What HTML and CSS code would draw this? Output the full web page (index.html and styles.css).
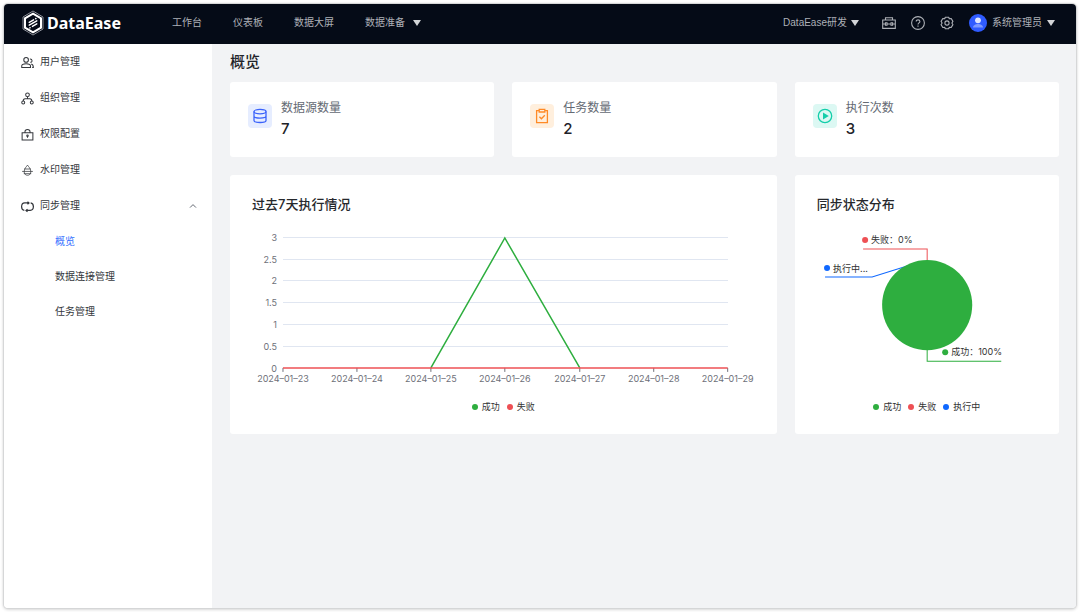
FILE: index.html
```html
<!DOCTYPE html>
<html lang="zh-CN">
<head>
    <meta charset="utf-8">
    <meta name="viewport" content="width=device-width, initial-scale=1.0" />
    <title>DataEase</title>
    <link rel="stylesheet" href="styles.css">
</head>
<body>
    <div class="window">
        <header class="header">
            <a class="logo" href="#">
                <svg class="logo-icon" viewBox="0 0 22 26">
                    <path d="M11 1L21 7V19L11 25L1 19V7Z" fill="none" stroke="#8b8f98" stroke-width="1"/>
                    <path d="M11 3.6L19 8.3V17.7L11 22.4L3 17.7V8.3Z" fill="none" stroke="#fff" stroke-width="2"/>
                    <path d="M7.2 12.4L11.6 9.8M7.2 15.2L14.8 10.8M10.4 16.4L14.8 13.8M13.6 8.7L14 8.5M7.8 17.9L8.2 17.7" stroke="#fff" stroke-width="1.4" stroke-linecap="round"/>
                </svg>
                <span>DataEase</span>
            </a>
            <nav class="nav">
                <a href="#">工作台</a>
                <a href="#">仪表板</a>
                <a href="#">数据大屏</a>
                <a href="#">数据准备<svg class="caret" viewBox="0 0 8 6"><path d="M0 0H8L4 6Z"/></svg></a>
            </nav>
            <div class="tools">
                <button type="button" class="org">DataEase研发<svg class="caret" viewBox="0 0 8 6"><path d="M0 0H8L4 6Z"/></svg></button>
                <button type="button" class="tool" aria-label="工具箱">
                    <svg class="icon" viewBox="0 0 14 14"><path d="M3.5 4V1.8H10.5V4M.7 4H13.3V12.4H.7ZM.7 8H3.4M5 8H9M10.6 8H13.3M3.4 6.8H5V9.2H3.4ZM9 6.8H10.6V9.2H9Z"/></svg>
                </button>
                <button type="button" class="tool" aria-label="帮助">
                    <svg class="icon" viewBox="0 0 14 14"><circle cx="7" cy="7" r="6.4"/><path d="M5.2 5.6C5.2 3.2 8.9 3.3 8.9 5.5C8.9 6.9 7 6.9 7 8.5M7 9.6V10.8"/></svg>
                </button>
                <button type="button" class="tool" aria-label="设置">
                    <svg class="icon" viewBox="0 0 14 14"><path d="M5.3 1.2H8.7L9.3 2.8L11.2 2.5L12.9 5.4L11.9 7L12.9 8.6L11.2 11.5L9.3 11.2L8.7 12.8H5.3L4.7 11.2L2.8 11.5L1.1 8.6L2.1 7L1.1 5.4L2.8 2.5L4.7 2.8Z" stroke-linejoin="round"/><circle cx="7" cy="7" r="2.1"/></svg>
                </button>
                <button type="button" class="user">
                    <svg class="avatar" viewBox="0 0 18 18"><circle cx="9" cy="9" r="9" fill="#2f5bff"/><circle cx="9" cy="6.3" r="2.9" fill="#dfe6ff"/><path d="M4 13.6C4 8.8 14 8.8 14 13.6Z" fill="#7e9aff"/></svg>
                    <span>系统管理员</span>
                    <svg class="caret" viewBox="0 0 8 6"><path d="M0 0H8L4 6Z"/></svg>
                </button>
            </div>
        </header>
        <div class="body">
            <aside class="sidebar">
                <ul class="menu">
                    <li><a href="#">
                        <svg class="icon" viewBox="0 0 14 14"><circle cx="5.5" cy="4.2" r="2.5"/><path d="M.8 12.3V10.6C.8 7.6 10.2 7.6 10.2 10.6V12.3ZM9.6 3.3C12.6 3.2 12.6 6.8 10 6.8M11 8.6C12.6 8.9 13.3 9.8 13.3 12.3H12"/></svg>用户管理</a></li>
                    <li><a href="#">
                        <svg class="icon" viewBox="0 0 14 14"><circle cx="7" cy="3" r="2"/><circle cx="2.4" cy="11.3" r="1.6"/><circle cx="11.6" cy="11.3" r="1.6"/><path d="M7 5V7.3M2.4 9.7C2.4 7.8 3 7.3 4.4 7.3H9.6C11 7.3 11.6 7.8 11.6 9.7"/></svg>组织管理</a></li>
                    <li><a href="#">
                        <svg class="icon" viewBox="0 0 14 14"><path d="M1.2 5H12.8V12.8H1.2ZM4.3 5V3.8C4.3.8 9.7.8 9.7 3.8V5M7 8.6V10.4"/><circle cx="7" cy="8.4" r=".8"/></svg>权限配置</a></li>
                    <li><a href="#">
                        <svg class="icon thin" viewBox="0 0 14 14"><path d="M7 1.2C6 3 3.4 4.6 3.4 8.4C3.4 13.4 10.6 13.4 10.6 8.4C10.6 4.6 8 3 7 1.2ZM3.4 5.4H10.6M1.2 8H12.8M3 10.4H11"/></svg>水印管理</a></li>
                    <li class="open"><a href="#">
                        <svg class="icon bold" viewBox="0 0 14 14"><path d="M3.6 11.2C-.4 10.6-.4 3.4 4 3.2H8.4M7 1.8L8.6 3.2L7 4.6M10.4 3.2C14.4 3.8 14.4 11 10 11.2H5.6M7 9.8L5.4 11.2L7 12.6"/></svg>同步管理
                        <svg class="arrow" viewBox="0 0 8 8"><path d="M1 5.6L4 2.6L7 5.6"/></svg></a>
                        <ul class="submenu">
                            <li><a class="active" href="#">概览</a></li>
                            <li><a href="#">数据连接管理</a></li>
                            <li><a href="#">任务管理</a></li>
                        </ul>
                    </li>
                </ul>
            </aside>
            <main class="main">
                <h1>概览</h1>
                <div class="grid">
                    <section class="card stat">
                        <span class="badge blue"><svg viewBox="0 0 16 16"><ellipse cx="8" cy="3.6" rx="6" ry="2.2"/><path d="M2 3.6V12.4C2 15.2 14 15.2 14 12.4V3.6M2 8C2 10.8 14 10.8 14 8"/></svg></span>
                        <div>
                            <p class="label">数据源数量</p>
                            <p class="value">7</p>
                        </div>
                    </section>
                    <section class="card stat">
                        <span class="badge orange"><svg viewBox="0 0 16 16"><path d="M5.2 2.6H2.6V14.6H13.4V2.6H10.8M5.2 1.4H10.8V4H5.2ZM5.4 8.8L7.4 10.8L10.8 7.2"/></svg></span>
                        <div>
                            <p class="label">任务数量</p>
                            <p class="value">2</p>
                        </div>
                    </section>
                    <section class="card stat">
                        <span class="badge green"><svg viewBox="0 0 16 16"><circle cx="8" cy="8" r="6.7"/><path class="solid" d="M6 4.4L11.8 8L6 11.6Z"/></svg></span>
                        <div>
                            <p class="label">执行次数</p>
                            <p class="value">3</p>
                        </div>
                    </section>
                    <section class="card chart wide">
                        <h2>过去7天执行情况</h2>
                        <svg class="plot" viewBox="0 0 547 165">
                            <g class="lines">
                                <path d="M53 13H498M53 35H498M53 56H498M53 78H498M53 100H498M53 122H498"/>
                            </g>
                            <g class="ticks">
                                <path d="M53 143V147M127 143V147M201 143V147M275 143V147M350 143V147M424 143V147M498 143V147"/>
                            </g>
                            <g class="axis-y">
                                <text x="47" y="16">3</text>
                                <text x="47" y="38">2.5</text>
                                <text x="47" y="59">2</text>
                                <text x="47" y="81">1.5</text>
                                <text x="47" y="103">1</text>
                                <text x="47" y="125">0.5</text>
                                <text x="47" y="147">0</text>
                            </g>
                            <g class="axis-x">
                                <text x="53" y="157">2024–01–23</text>
                                <text x="127" y="157">2024–01–24</text>
                                <text x="201" y="157">2024–01–25</text>
                                <text x="275" y="157">2024–01–26</text>
                                <text x="350" y="157">2024–01–27</text>
                                <text x="424" y="157">2024–01–28</text>
                                <text x="498" y="157">2024–01–29</text>
                            </g>
                            <path class="line success" d="M201 143L275 13L350 143"/>
                            <path class="line fail" d="M53 143H498"/>
                        </svg>
                        <ul class="legend">
                            <li class="success">成功</li>
                            <li class="fail">失败</li>
                        </ul>
                    </section>
                    <section class="card chart">
                        <h2>同步状态分布</h2>
                        <svg class="plot" viewBox="0 0 264 165">
                            <path class="guide success" d="M132 120V136H206"/>
                            <path class="guide fail" d="M132 40V24H68"/>
                            <path class="guide running" d="M112 41L77 52H30"/>
                            <circle cx="132" cy="80" r="45" fill="#2eae3f"/>
                            <g class="pie-text">
                                <circle cx="70" cy="15" r="3" fill="#ee5054"/>
                                <text x="76" y="18">失败：0%</text>
                                <circle cx="32" cy="43" r="3" fill="#0f68ff"/>
                                <text x="38" y="47">执行中...</text>
                                <circle cx="150" cy="127" r="3" fill="#2eae3f"/>
                                <text x="156" y="130">成功：100%</text>
                            </g>
                        </svg>
                        <ul class="legend">
                            <li class="success">成功</li>
                            <li class="fail">失败</li>
                            <li class="running">执行中</li>
                        </ul>
                    </section>
                </div>
            </main>
        </div>
    </div>
</body>
</html>
```
FILE: styles.css
```css
*{
	margin: 0;
	padding: 0;
	box-sizing: border-box;
}
body{
	min-height: 100vh;
	padding: 4px;
	display: flex;
	background-color: #fff;
	color: #1f2329;
	font-family: "Liberation Sans", "Noto Sans CJK SC", sans-serif;
	font-size: 10px;
	line-height: 16px;
}
ul{
	list-style: none;
}
a{
	color: inherit;
	text-decoration: none;
}
button{
	border: 0;
	background: none;
	color: inherit;
	font: inherit;
	cursor: pointer;
}
svg{
	display: block;
	flex: none;
}
.window{
	flex: 1;
	display: flex;
	flex-direction: column;
	border-radius: 4px;
	overflow: hidden;
	box-shadow: 0 0 1px 1px #d4d5d6, 0 1px 3px 1px rgba(0,0,0,.15);
}

/* header */
.header{
	height: 40px;
	padding: 0 21px 2px 18px;
	display: flex;
	align-items: center;
	background-color: #050b17;
	color: #aeb1b7;
}
.logo{
	display: flex;
	align-items: center;
	gap: 3px;
	color: #fff;
	font: bold 16px/24px "Noto Sans", sans-serif;
}
.logo-icon{
	width: 22px;
	height: 26px;
}
.nav{
	margin-left: 51px;
	display: flex;
	gap: 31px;
}
.nav a{
	display: flex;
	align-items: center;
	gap: 8px;
}
.caret{
	width: 8px;
	height: 6px;
	fill: #d3d5d8;
}
.icon{
	width: 14px;
	height: 14px;
	fill: none;
	stroke: currentColor;
	stroke-width: 1.1;
}
.icon.thin{
	stroke-width: .8;
}
.icon.bold{
	stroke-width: 1.3;
}
.tools{
	margin-left: auto;
	display: flex;
	align-items: center;
	gap: 15px;
}
.org{
	margin-right: 8px;
	display: flex;
	align-items: center;
	gap: 4px;
}
.user{
	display: flex;
	align-items: center;
	gap: 5px;
}
.avatar{
	width: 18px;
	height: 18px;
}

/* sidebar */
.body{
	flex: 1;
	display: flex;
}
.sidebar{
	width: 208px;
	background-color: #fff;
	color: #34373c;
}
.menu a{
	height: 36px;
	padding: 0 15px 0 17px;
	display: flex;
	align-items: center;
	gap: 6px;
}
.menu .icon{
	width: 13px;
	height: 13px;
}
.menu .arrow{
	width: 8px;
	height: 8px;
	margin-left: auto;
	fill: none;
	stroke: #646a73;
}
.menu .submenu a{
	height: 35px;
	padding-left: 51px;
}
.submenu .active{
	color: #3370ff;
}

/* content */
.main{
	flex: 1;
	padding: 0 17px 18px 18px;
	background-color: #f2f3f5;
}
.main h1{
	margin-bottom: 2px;
	font-size: 15px;
	font-weight: 500;
	line-height: 36px;
}
.grid{
	display: grid;
	grid-template-columns: repeat(3, 1fr);
	gap: 18px;
}
.card{
	border-radius: 3px;
	background-color: #fff;
}
.stat{
	padding: 15px 18px 18px;
	display: flex;
	gap: 9px;
}
.badge{
	width: 24px;
	height: 24px;
	margin-top: 7px;
	display: flex;
	align-items: center;
	justify-content: center;
	border-radius: 4px;
}
.badge svg{
	width: 16px;
	height: 16px;
	fill: none;
	stroke: currentColor;
	stroke-width: 1.3;
}
.badge .solid{
	fill: currentColor;
	stroke: none;
}
.blue{
	background-color: #e6edff;
	color: #3b63fb;
}
.orange{
	background-color: #ffefdd;
	color: #ff8a26;
}
.green{
	background-color: #dcf8f3;
	color: #14ceaa;
}
.label{
	color: #646a73;
	font-size: 12px;
	line-height: 22px;
}
.value{
	font-family: Inter, sans-serif;
	font-size: 15px;
	font-weight: 500;
	line-height: 20px;
}
.wide{
	grid-column: span 2;
}
.chart h2{
	padding: 18px 22px 10px;
	color: #26282c;
	font-family: Inter, "Noto Sans CJK SC", sans-serif;
	font-size: 13px;
	font-weight: 500;
	line-height: 22px;
}
.plot{
	width: 100%;
	height: auto;
}
.plot text{
	font-family: Inter, "Noto Sans CJK SC", sans-serif;
	font-size: 9px;
}
.lines path{
	stroke: #e0e6f1;
	shape-rendering: crispEdges;
}
.ticks path{
	stroke: #6e7079;
}
.axis-y text{
	fill: #6e7079;
	text-anchor: end;
}
.axis-x text{
	fill: #6e7079;
	text-anchor: middle;
}
.line{
	fill: none;
	stroke-width: 1.5;
}
.line.success, .guide.success{
	stroke: #2eae3f;
}
.line.fail, .guide.fail{
	stroke: #ee5054;
}
.guide.running{
	stroke: #0f68ff;
}
.guide{
	fill: none;
	stroke-width: 1;
}
.pie-text text{
	fill: #333;
}
.legend{
	padding: 10px 0 20px;
	display: flex;
	justify-content: center;
	gap: 7px;
	color: #333;
	font-size: 9px;
	line-height: 14px;
}
.legend li{
	display: flex;
	align-items: center;
	gap: 4px;
}
.legend li::before{
	content: "";
	width: 6px;
	height: 6px;
	border-radius: 50%;
}
.legend .success::before{
	background-color: #2eae3f;
}
.legend .fail::before{
	background-color: #ee5054;
}
.legend .running::before{
	background-color: #0f68ff;
}
```
